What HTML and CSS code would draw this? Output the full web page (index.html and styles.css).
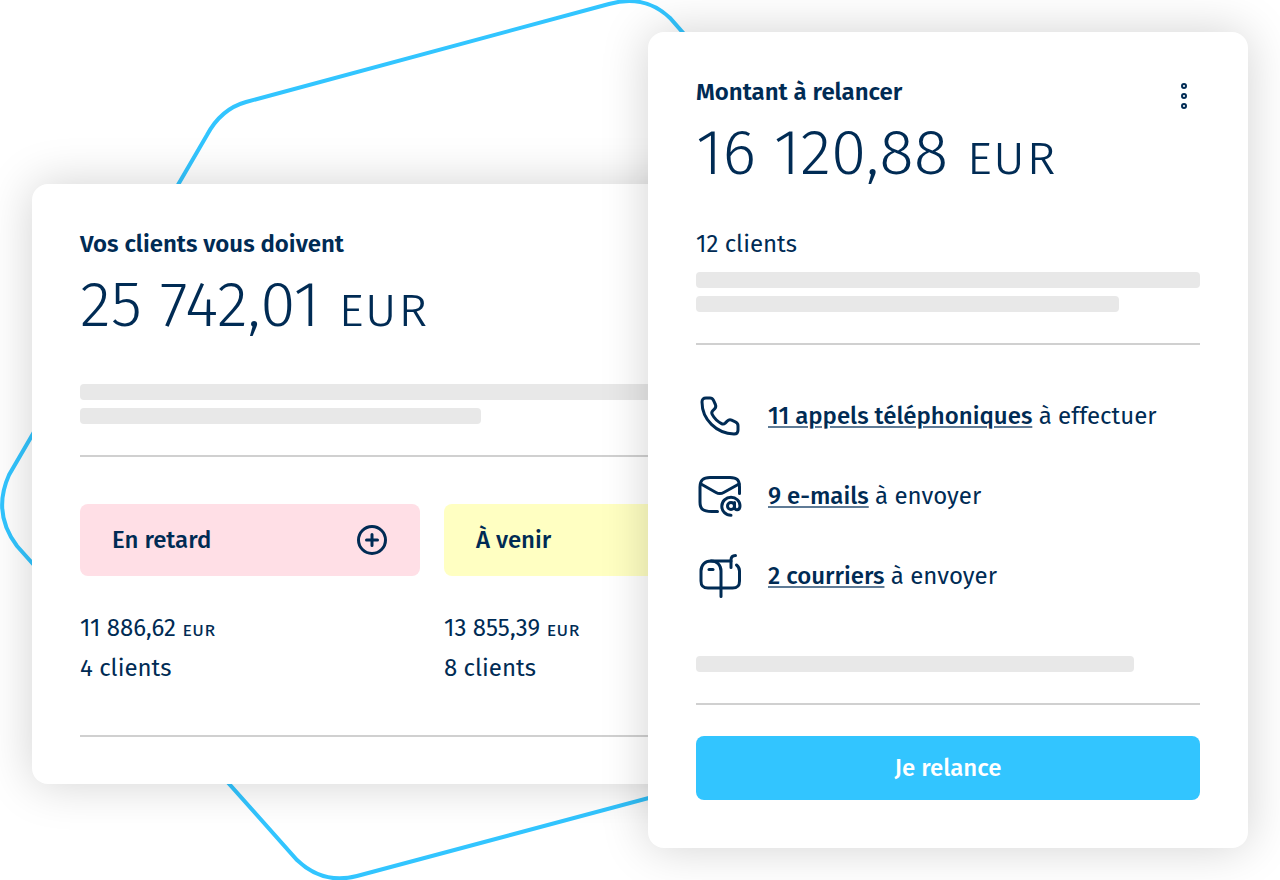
FILE: index.html
```html
<!DOCTYPE html>
<html lang="fr">
    <head>
        <meta charset="UTF-8" />
        <meta name="viewport" content="width=device-width, initial-scale=1.0" />
        <title>Relances clients</title>
        <link rel="stylesheet" href="styles.css">
    </head>
    <body>
        <main class="stage">
            <svg class="outline" viewBox="0 0 1280 880" fill="none" stroke="#32c5ff" stroke-width="4" aria-hidden="true">
                <path d="M207 135 Q221 109 246 102 L609 4 Q645 -6 670 18 L720 75 V779 L357 876 Q323 885 297 860 L17 546 Q-8 513 9 475 Z" />
            </svg>

            <section class="card card-due">
                <h2 class="title">Vos clients vous doivent</h2>
                <p class="amount">25 742,01 <span class="currency">EUR</span></p>
                <div class="lines">
                    <div class="line"></div>
                    <div class="line line-short"></div>
                </div>
                <hr />
                <div class="columns">
                    <div>
                        <div class="tag tag-late">
                            <h3>En retard</h3>
                            <button class="icon-btn" aria-label="Ajouter">
                                <svg width="32" height="32" viewBox="0 0 32 32" fill="none" stroke="currentColor" stroke-width="3" stroke-linecap="round">
                                    <circle cx="16" cy="16" r="13.5" />
                                    <path d="M16 10.5v11M10.5 16h11" />
                                </svg>
                            </button>
                        </div>
                        <p class="sum">11 886,62 <span class="currency">EUR</span></p>
                        <p>4 clients</p>
                    </div>
                    <div>
                        <div class="tag tag-next">
                            <h3>À venir</h3>
                        </div>
                        <p class="sum">13 855,39 <span class="currency">EUR</span></p>
                        <p>8 clients</p>
                    </div>
                </div>
                <hr class="last" />
            </section>

            <section class="card card-remind">
                <div class="card-head">
                    <h2 class="title">Montant à relancer</h2>
                    <button class="icon-btn" aria-label="Options">
                        <svg width="32" height="32" viewBox="0 0 32 32" fill="none" stroke="currentColor" stroke-width="2">
                            <circle cx="16" cy="6" r="2" />
                            <circle cx="16" cy="16" r="2" />
                            <circle cx="16" cy="26" r="2" />
                        </svg>
                    </button>
                </div>
                <p class="amount">16 120,88 <span class="currency">EUR</span></p>
                <p class="count">12 clients</p>
                <div class="lines">
                    <div class="line"></div>
                    <div class="line line-long"></div>
                </div>
                <hr />
                <ul class="actions">
                    <li>
                        <svg class="icon" viewBox="0 0 48 48">
                            <path d="M10 6h4c1.600 0 2.700.8 3.400 2.200l2 4.300c.7 1.600.4 3-.7 4.200l-2 2.100c-1 1.100-1.200 2.300-.5 3.600 2 3.900 5.200 7 9.300 9.200 1.300.7 2.600.5 3.700-.5l2-2c1.300-1.200 2.800-1.600 4.400-.9l3.700 1.600c1.700.8 2.700 2 2.700 3.900V38c0 2.700-1.400 4-4 4C20.500 41.500 6 27.500 6 10c0-2.600 1.400-4 4-4z" />
                        </svg>
                        <p><a href="#appels">11 appels téléphoniques</a> à effectuer</p>
                    </li>
                    <li>
                        <svg class="icon" viewBox="0 0 48 48">
                            <path d="M21.500 39.500h-6C7 39.500 4 37 4 30V15C4 8 7 5.500 14 5.500h20c7 0 9.500 2.500 9.500 9.500v6.500" />
                            <path d="M5 12l15 8.500c2.700 1.500 5 1.500 7.700 0L43 12" />
                            <circle cx="35" cy="34" r="3.500" />
                            <path d="M38.500 30.500v4.500c0 3.800 5.500 3.800 5.500-1 0-5-4-8.700-9-8.700s-9.200 3.900-9.200 9c0 5 4 9 9.200 9" />
                        </svg>
                        <p><a href="#emails">9 e-mails</a> à envoyer</p>
                    </li>
                    <li>
                        <svg class="icon" viewBox="0 0 48 48">
                            <path d="M25 36H12c-5 0-7-2-7-7V19C5 13 9 9 15 9s10 4 10 10V44.500" />
                            <path d="M15 9h20M25 36h11.500c5 0 7-2 7-7V19c0-2.500-1-4.500-3-6" />
                            <path d="M35 15.500V8c0-3 1.500-4.500 4.500-4.500" />
                            <path d="M13 17.500h4" />
                        </svg>
                        <p><a href="#courriers">2 courriers</a> à envoyer</p>
                    </li>
                </ul>
                <div class="line line-note"></div>
                <hr />
                <button class="submit">Je relance</button>
            </section>
        </main>
    </body>
</html>
```
FILE: styles.css
```css
* {
    box-sizing: border-box;
}
body,
h2,
h3,
p,
ul {
    margin: 0;
    padding: 0;
}
body {
    background: #fff;
    color: #002b54;
    font-family: "Fira Sans", "Noto Sans", sans-serif;
    font-size: 24px;
    line-height: 24px;
}
.stage {
    position: relative;
    display: grid;
    grid-template-columns: 616fr 184fr 416fr;
    align-items: end;
    padding: 32px;
    overflow: hidden;
}
.outline {
    position: absolute;
    top: 0;
    left: 0;
    width: 100%;
}
.card {
    position: relative;
    grid-row: 1;
    padding: 48px;
    background: #fff;
    border-radius: 16px;
    box-shadow: 0 0 48px rgba(0, 0, 0, 0.18);
}
.card-due {
    grid-column: 1 / 3;
    margin-bottom: 64px;
}
.card-remind {
    grid-column: 2 / 4;
}
.card-head {
    display: flex;
    justify-content: space-between;
    height: 24px;
}
.title {
    font-size: 24px;
    font-weight: 600;
    line-height: 24px;
}
.amount {
    margin: 17px 0 47px;
    font-size: 64px;
    font-weight: 300;
    line-height: 64px;
    white-space: nowrap;
}
.currency {
    font-variant-caps: all-small-caps;
    line-height: 1;
}
.amount .currency {
    font-size: 56px;
}
.count {
    margin-bottom: 16px;
}

/* placeholder text lines */
.lines {
    display: grid;
    gap: 8px;
}
.line {
    height: 16px;
    background: #e8e8e8;
    border-radius: 4px;
}
.line-short {
    width: 57%;
}
.line-long {
    width: 84%;
}
.line-note {
    width: 87%;
}
hr {
    height: 2px;
    margin: 31px 0;
    border: 0;
    background: #d0d0d0;
}

.columns {
    display: grid;
    grid-template-columns: 1fr 1fr;
    gap: 24px;
    margin-top: 47px;
}
.tag {
    display: flex;
    align-items: center;
    justify-content: space-between;
    height: 72px;
    padding: 0 32px;
    margin-bottom: 40px;
    border-radius: 8px;
}
.tag h3 {
    font-size: 24px;
    font-weight: 500;
}
.tag-late {
    background: #ffdfe6;
}
.tag-next {
    background: #ffffc2;
}
.sum {
    margin-bottom: 16px;
}
.sum .currency {
    font-size: 20px;
}
hr.last {
    margin: 55px 0 -1px;
}

.icon-btn {
    width: 32px;
    height: 32px;
    padding: 0;
    border: 0;
    background: none;
    color: inherit;
    cursor: pointer;
}
.icon-btn svg {
    display: block;
}
.actions {
    display: grid;
    gap: 32px;
    margin: 47px 0 56px;
    list-style: none;
}
.actions li {
    display: flex;
    align-items: center;
    gap: 24px;
}
.actions a {
    color: inherit;
    font-weight: 500;
    text-decoration-thickness: 2px;
    text-underline-offset: 2px;
    text-decoration-color: #5f7b96;
}
.icon {
    width: 48px;
    height: 48px;
    fill: none;
    stroke: currentColor;
    stroke-width: 3;
    stroke-linecap: round;
    stroke-linejoin: round;
}
.submit {
    display: block;
    width: 100%;
    height: 64px;
    border: 0;
    border-radius: 8px;
    background: #32c5ff;
    color: #fff;
    font: inherit;
    font-weight: 500;
    cursor: pointer;
}
```
